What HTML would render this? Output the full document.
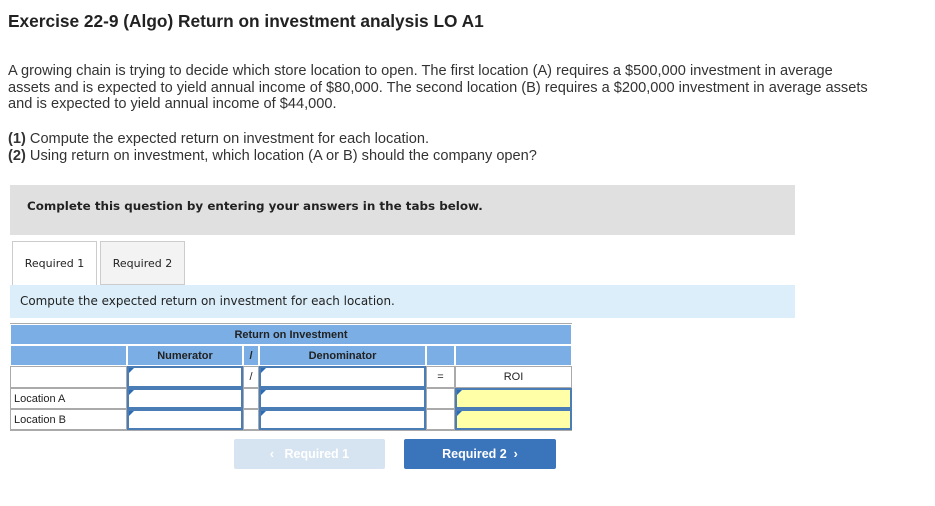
<!DOCTYPE html><html><head><style>
body{margin:0;width:935px;height:506px;background:#fff;position:relative;font-family:"Liberation Sans",Arial,sans-serif;color:#222;overflow:hidden}
.a{position:absolute}
h1{position:absolute;left:8px;top:11px;margin:0;font-size:17.3px;font-weight:bold;color:#222}
.p{font-size:14.6px;line-height:16.5px;left:8px;color:#333;white-space:nowrap}
.v{font-family:"DejaVu Sans",Verdana,sans-serif}
.c{position:absolute;box-sizing:border-box;font-size:11px;display:flex;align-items:center}
.hd{background:#7aaee4;border:1px solid #fff;justify-content:center;font-weight:bold;color:#222}
.in{border:2px solid #4a7db5;background:#fff}
.in:before{content:"";position:absolute;left:0;top:0;border-left:5px solid #2b6cb5;border-bottom:5px solid transparent}
.cl{border:1px solid #aaa;background:#fff}
</style></head><body>
<h1>Exercise 22-9 (Algo) Return on investment analysis LO A1</h1>
<div class="a p" style="top:63px">A growing chain is trying to decide which store location to open. The first location (A) requires a $500,000 investment in average<br>assets and is expected to yield annual income of $80,000. The second location (B) requires a $200,000 investment in average assets<br>and is expected to yield annual income of $44,000.</div>
<div class="a p" style="top:131px"><b>(1)</b> Compute the expected return on investment for each location.<br><b>(2)</b> Using return on investment, which location (A or B) should the company open?</div>
<div class="a v" style="left:10px;top:185px;width:785px;height:50px;background:#e0e0e0"></div>
<div class="a v" style="left:27px;top:199px;font-size:11.9px;font-weight:bold">Complete this question by entering your answers in the tabs below.</div>
<div class="a v" style="left:12px;top:241px;width:85px;height:46px;border:1px solid #ccc;border-bottom:none;background:#fff;font-size:11px;text-align:center;line-height:44px;box-sizing:border-box">Required 1</div>
<div class="a v" style="left:100px;top:241px;width:85px;height:44px;border:1px solid #ccc;background:#f3f3f3;font-size:11px;text-align:center;line-height:44px;box-sizing:border-box">Required 2</div>
<div class="a v" style="left:10px;top:285px;width:785px;height:33px;background:#dbeefa;font-size:11.95px;line-height:33px;padding-left:10px;box-sizing:border-box">Compute the expected return on investment for each location.</div>
<div class="a" style="left:10px;top:323px;width:562px;height:108px;background:#aaa"></div>
<div class="c hd" style="left:10px;top:324px;width:562px;height:21px">Return on Investment</div>
<div class="c hd" style="left:10px;top:345px;width:117px;height:21px"></div>
<div class="c hd" style="left:127px;top:345px;width:116px;height:21px">Numerator</div>
<div class="c hd" style="left:243px;top:345px;width:16px;height:21px">/</div>
<div class="c hd" style="left:259px;top:345px;width:167px;height:21px">Denominator</div>
<div class="c hd" style="left:426px;top:345px;width:29px;height:21px"></div>
<div class="c hd" style="left:455px;top:345px;width:117px;height:21px"></div>
<div class="c cl" style="left:10px;top:366px;width:117px;height:22px"></div>
<div class="c in" style="left:127px;top:366px;width:116px;height:22px"></div>
<div class="c cl" style="left:243px;top:366px;width:16px;height:22px;justify-content:center">/</div>
<div class="c in" style="left:259px;top:366px;width:167px;height:22px"></div>
<div class="c cl" style="left:426px;top:366px;width:29px;height:22px;justify-content:center">=</div>
<div class="c cl" style="left:455px;top:366px;width:117px;height:22px;justify-content:center">ROI</div>
<div class="c cl" style="left:10px;top:388px;width:117px;height:21px;padding-left:3px">Location A</div>
<div class="c in" style="left:127px;top:388px;width:116px;height:21px"></div>
<div class="c cl" style="left:243px;top:388px;width:16px;height:21px"></div>
<div class="c in" style="left:259px;top:388px;width:167px;height:21px"></div>
<div class="c cl" style="left:426px;top:388px;width:29px;height:21px"></div>
<div class="c in" style="left:455px;top:388px;width:117px;height:21px;background:#ffffa8"></div>
<div class="c cl" style="left:10px;top:409px;width:117px;height:21px;padding-left:3px">Location B</div>
<div class="c in" style="left:127px;top:409px;width:116px;height:21px"></div>
<div class="c cl" style="left:243px;top:409px;width:16px;height:21px"></div>
<div class="c in" style="left:259px;top:409px;width:167px;height:21px"></div>
<div class="c cl" style="left:426px;top:409px;width:29px;height:21px"></div>
<div class="c in" style="left:455px;top:409px;width:117px;height:21px;background:#ffffa8"></div>
<div class="a" style="left:234px;top:439px;width:151px;height:30px;background:#d6e3f1;border-radius:2px;color:#fff;font-size:12.5px;font-weight:bold;text-align:center;line-height:30px">&lsaquo;&nbsp;&nbsp; Required 1</div>
<div class="a" style="left:404px;top:439px;width:152px;height:30px;background:#3a74bb;border-radius:2px;color:#fff;font-size:12.5px;font-weight:bold;text-align:center;line-height:30px">Required 2 &nbsp;&rsaquo;</div>
</body></html>
